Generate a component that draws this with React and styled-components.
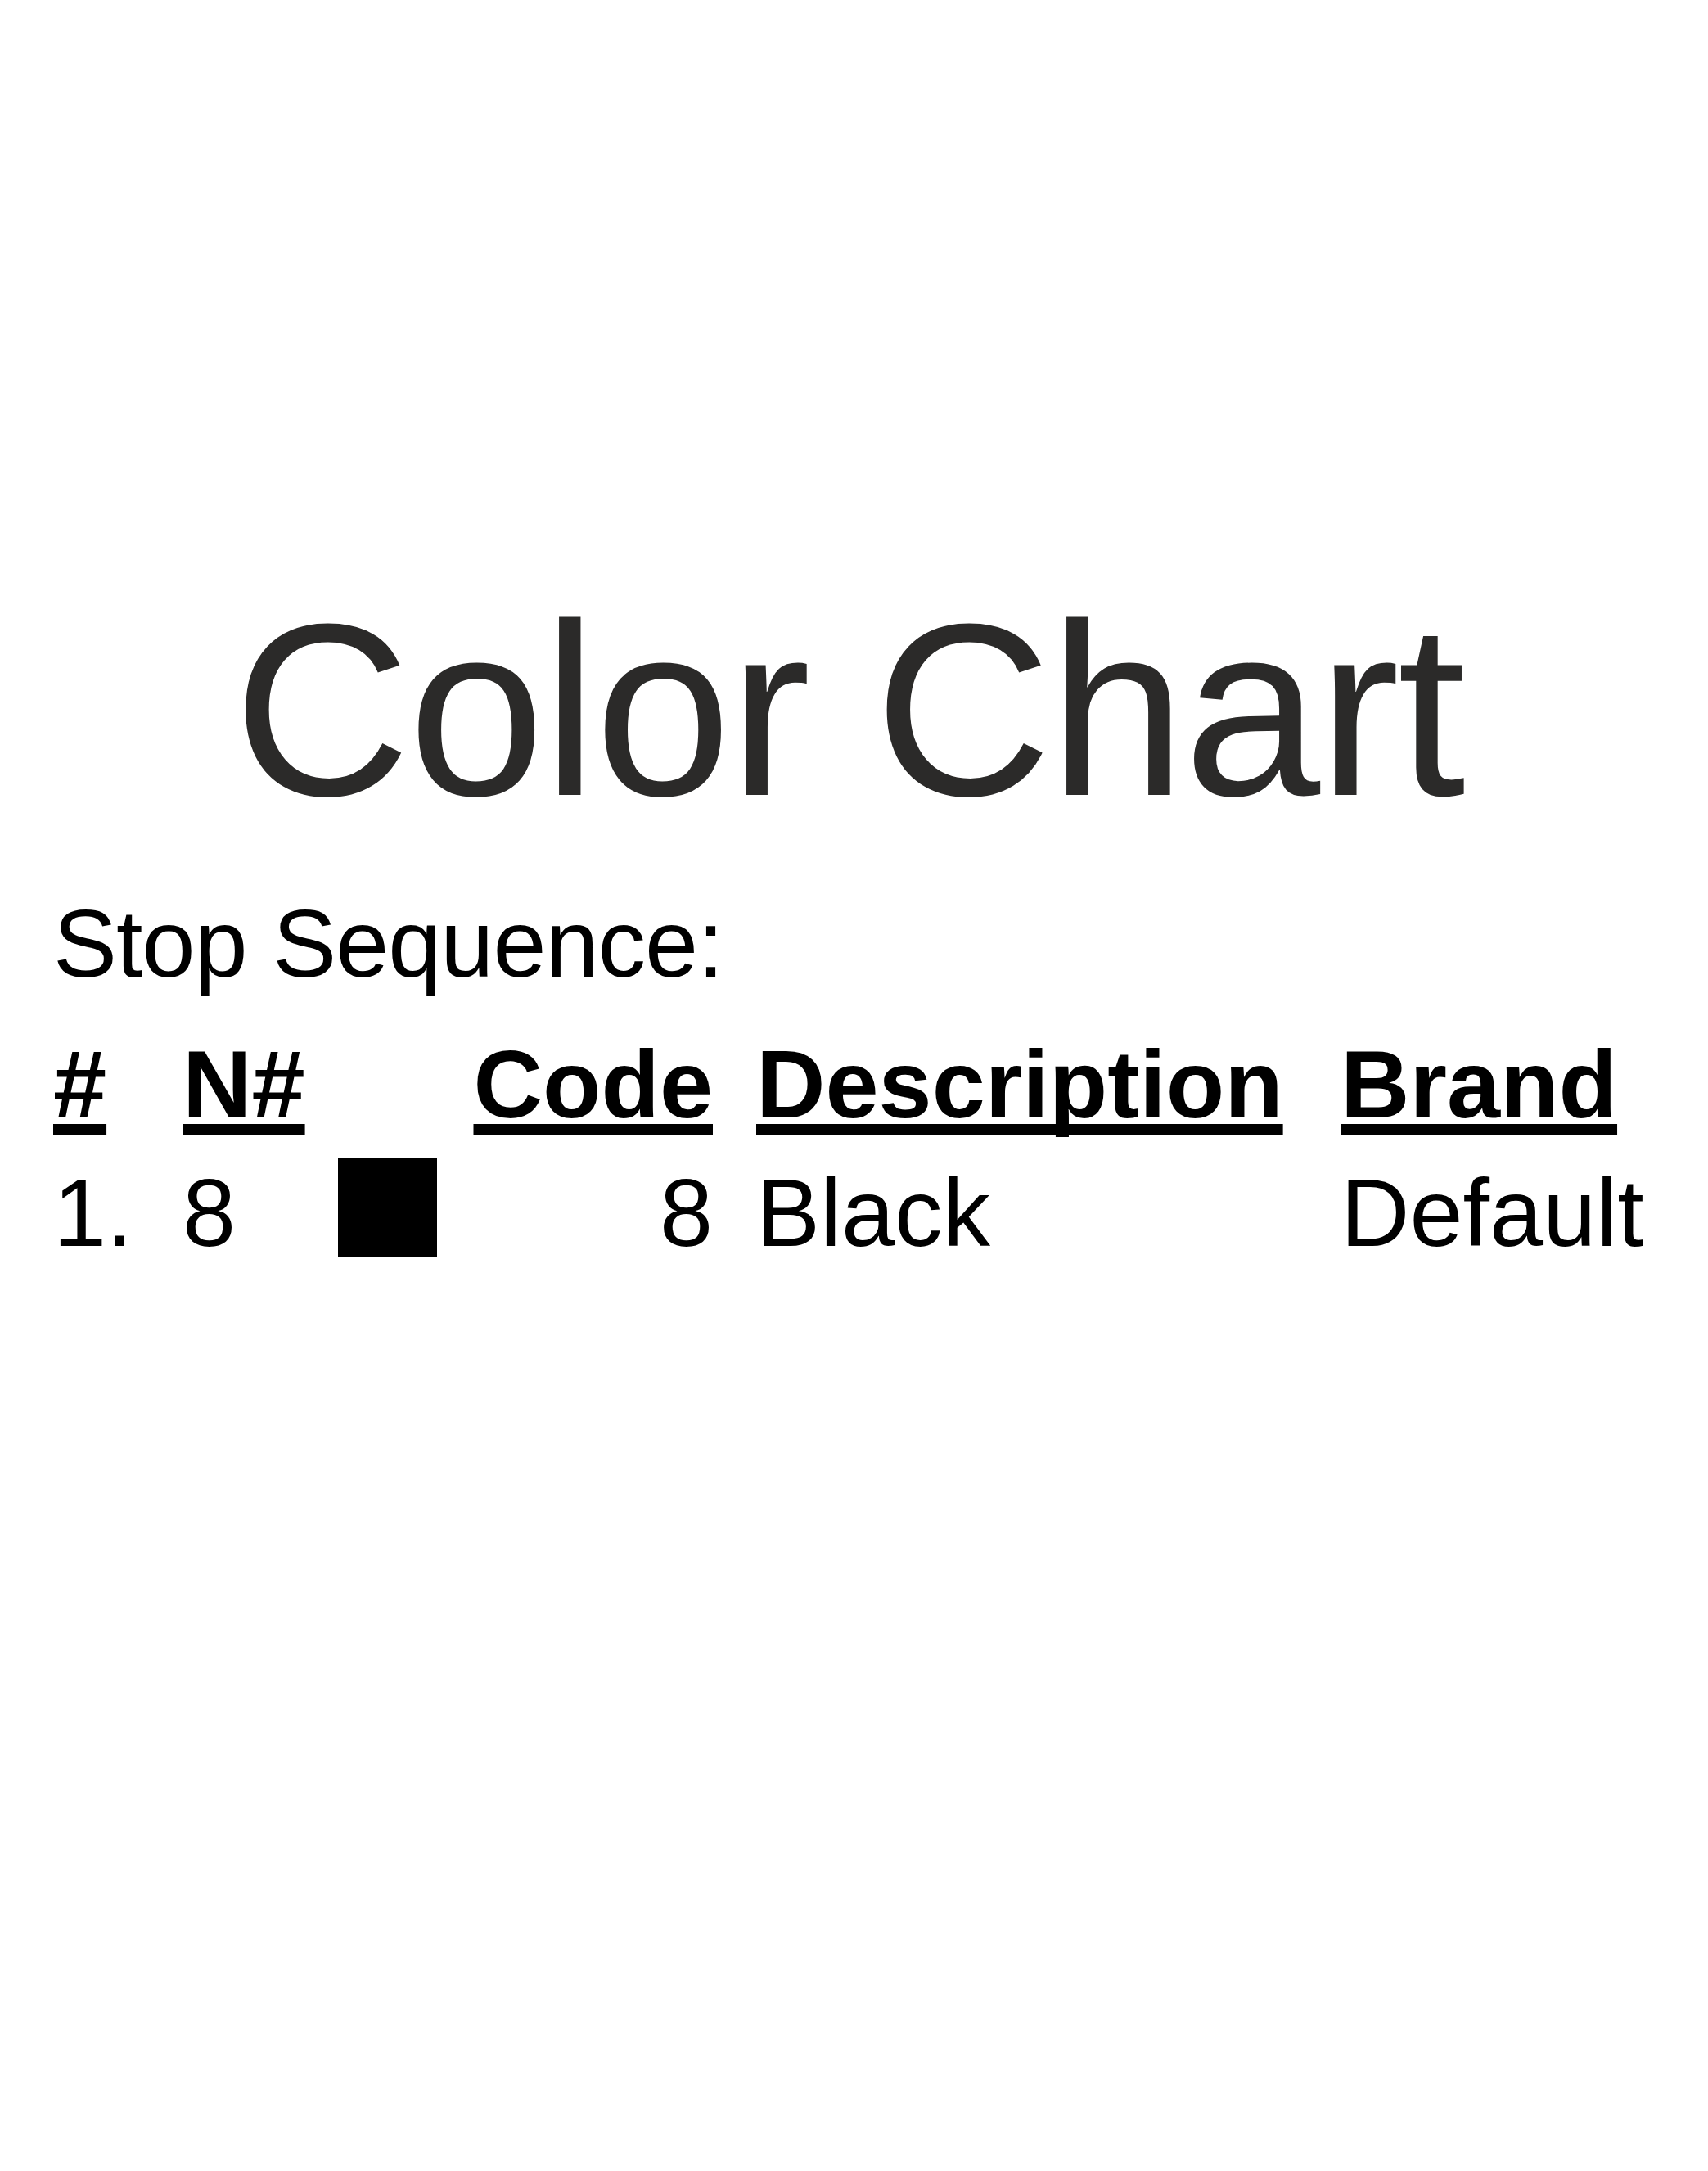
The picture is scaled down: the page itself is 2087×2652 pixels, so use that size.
import React from "react";
import styled, { createGlobalStyle } from "styled-components";

const Global = createGlobalStyle`
  html, body {
    margin: 0;
    padding: 0;
    background: #ffffff;
  }
  body {
    font-family: "Liberation Sans", Arial, sans-serif;
  }
`;

const Page = styled.div`
  width: 2087px;
  height: 2652px;
  box-sizing: border-box;
  padding-top: 717px;
  display: flex;
  flex-direction: column;
  background: #ffffff;
`;

const Title = styled.h1`
  margin: 0;
  padding-right: 14px;
  font-family: "Liberation Sans", Arial, sans-serif;
  font-weight: 400;
  font-size: 300px;
  line-height: 300px;
  color: #2b2a29;
  text-align: center;
  letter-spacing: -2.8px;
`;

const Section = styled.section`
  margin-top: 77px;
  padding-left: 65px;
  display: flex;
  flex-direction: column;
`;

const Label = styled.div`
  font-size: 117px;
  line-height: 117px;
  letter-spacing: -1px;
  color: #000;
`;

const Grid = styled.div`
  margin-top: 55px;
  display: grid;
  grid-template-columns: 158px 190px 121px 390px 714px auto;
  row-gap: 40px;
  font-size: 117px;
  line-height: 117px;
  color: #000;
`;

const Head = styled.div`
  font-weight: 700;
  text-align: ${(p) => (p.$right ? "right" : "left")};
  padding-right: ${(p) => (p.$right ? "53px" : "0")};
  white-space: nowrap;
`;

const Under = styled.span`
  text-decoration: underline;
  text-decoration-thickness: 14px;
  text-underline-offset: 8px;
  text-decoration-skip-ink: none;
`;

const Cell = styled.div`
  font-weight: 400;
  text-align: ${(p) => (p.$right ? "right" : "left")};
  padding-right: ${(p) => (p.$right ? "53px" : "0")};
  white-space: nowrap;
`;

const Swatch = styled.div`
  width: 121px;
  height: 121px;
  margin-top: -8px;
  background: ${(p) => p.$color};
`;

const rows = [
  { n: "1.", needle: "8", color: "#000000", code: "8", desc: "Black", brand: "Default" },
];

export default function App() {
  return (
    <>
      <Global />
      <Page>
        <Title>Color Chart</Title>
        <Section>
          <Label>Stop Sequence:</Label>
          <Grid>
            <Head><Under>#</Under></Head>
            <Head><Under>N#</Under></Head>
            <Head />
            <Head $right><Under>Code</Under></Head>
            <Head><Under>Description</Under></Head>
            <Head><Under>Brand</Under></Head>
            {rows.map((r) => (
              <React.Fragment key={r.n}>
                <Cell>{r.n}</Cell>
                <Cell>{r.needle}</Cell>
                <Swatch $color={r.color} />
                <Cell $right>{r.code}</Cell>
                <Cell>{r.desc}</Cell>
                <Cell>{r.brand}</Cell>
              </React.Fragment>
            ))}
          </Grid>
        </Section>
      </Page>
    </>
  );
}
